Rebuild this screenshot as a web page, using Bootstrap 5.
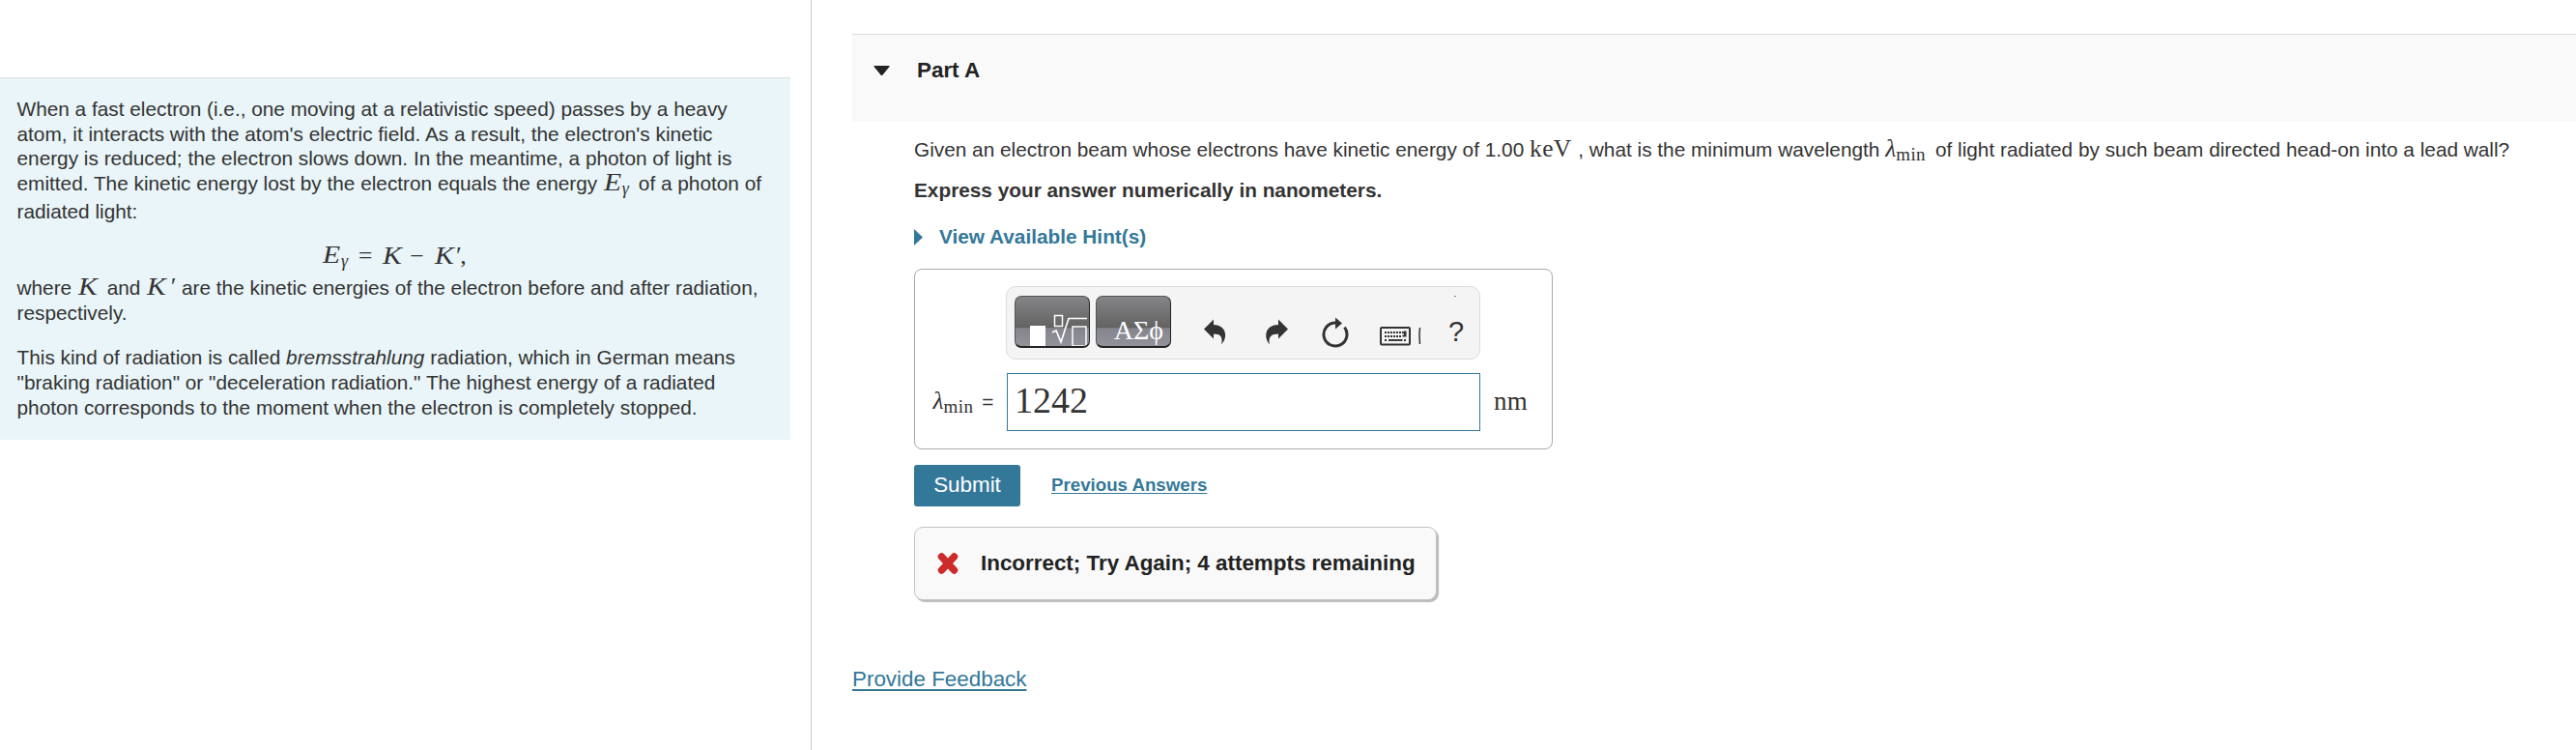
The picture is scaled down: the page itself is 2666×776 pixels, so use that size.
<!DOCTYPE html>
<html lang="en">
<head>
<meta charset="utf-8">
<meta name="viewport" content="width=device-width, initial-scale=1">
<title>Part A</title>
<link rel="stylesheet" href="https://cdn.jsdelivr.net/npm/bootstrap@5.3.0/dist/css/bootstrap.min.css">
<style>
  body { font-family: "Liberation Sans", Arial, sans-serif; font-size: 20.8px; line-height: 26px; color: #333; background: #fff; }
  a, .tint { color: #347899; }
  .screen { height: 776px; }
  .intro-col { width: 840px; border-right: 1px solid #c0c6cf; padding-top: 80px; }
  .intro { width: 818px; height: 375px; background: #e9f5f8; border-top: 1px solid #dcdcdc; padding: 19px 17.5px 0; }
  .intro p { line-height: 25.7px; white-space: nowrap; }
  .intro .tall { display: inline-block; line-height: 31px; }
  .intro .aside-note { margin-top: 21px; }
  .equation { width: 149px; height: 26px; margin: 18.5px 0 6.5px 316px; }

  .math { display: inline-block; line-height: 0; white-space: nowrap; font-family: "Liberation Serif", "Times New Roman", serif; font-size: 25.5px; }
  .math i, .math span { display: inline-block; transform-origin: 0 50%; }
  .math .wide { transform: scaleX(1.16); }
  .math .low { font-size: 18px; position: relative; top: 4px; }
  .m-energy { width: 31px; padding-left: 1px; } .m-energy .low { margin-left: 3px; }
  .m-k { width: 25px; padding-left: 1px; } .m-kp { width: 31px; padding-left: 1px; }
  .m-kp .prime { margin-left: 6px; }
  .m-kev { width: 44.5px; letter-spacing: .4px; }
  .m-lambda { width: 46px; }
  .m-lambda .low { font-size: 19px; letter-spacing: .4px; }

  .part-col { padding: 35px 0 0 42px; }
  .part-head { height: 91px; background: #f9f9f9; border-top: 1px solid #dcdcdc; padding-left: 22px; padding-bottom: 17px; font-size: 22.4px; color: #222; }
  .part-head svg { margin-right: 28px; }
  .part-body { padding-left: 64px; }
  .question { margin: 16px 0 0; }
  .hints { margin-top: 22px; gap: 17px; }
  .answer { width: 661px; height: 187px; border: 1px solid #aaa; border-radius: 8px; margin-top: 20px; padding-top: 17px; }
  .tools { width: 491px; height: 76px; margin-left: 94px; background: #f4f4f4; border: 1px solid #ddd; border-radius: 10px; padding: 9px 0 0 8px; }
  .key { width: 78px; height: 54px; border: 1px solid #555; border-right-color: #222; border-bottom: 2px solid #222; border-radius: 7px; background: linear-gradient(#858588 0, #626262 63%, #85858d 64%, #92929b 100%); overflow: hidden; color: #fff; padding: 0; }
  .key + .key { margin-left: 6px; }
  .greek { font: 28px/30px "Liberation Serif", serif; padding: 18px 7px 0 0; text-align: right; display: block; }
  .help { font-size: 29px; line-height: 54px; color: #333; width: 17px; margin-left: 28px; padding-top: 10px; }
  .speck { width: 2px; height: 1px; background: #777; left: 6px; top: 0; }
  .entry { margin-top: 14px; }
  .entry-label { width: 95px; padding-left: 18.5px; }
  .entry-label .math { width: 45px; }
  .entry input { width: 490px; height: 60px; border: 1px solid #347899; padding: 0 0 4px 7px; font: 38px "Liberation Serif", "Times New Roman", serif; color: #333; border-radius: 0; outline: 0; }
  .unit { font: 27px/30px "Liberation Serif", serif; margin-left: 14px; letter-spacing: .3px; padding-bottom: 2px; }
  .actions { margin-top: 16px; height: 43px; }
  .btn-submit { width: 110px; height: 43px; background: #347899; color: #fff; border-radius: 3px; font-size: 22.4px; line-height: 42px; padding: 0 0 1px; border: 0; }
  .previous { font-size: 18.7px; margin-left: 32px; padding-bottom: 2px; text-underline-offset: 2px; text-decoration-thickness: 1px; }
  .feedback { width: 541px; height: 76px; margin-top: 21px; background: #f9f9f9; border: 1px solid #c4c4c4; border-radius: 9px; box-shadow: 2px 2px 1px #bbb; padding-left: 23px; font-size: 22.4px; color: #222; }
  .feedback span { margin-left: 23px; }
  .provide { font-size: 22.4px; margin-top: 69px; text-underline-offset: 3px; text-decoration-thickness: 2px; }
</style>
</head>
<body>
<div class="screen d-flex overflow-hidden">
  <aside class="intro-col flex-shrink-0">
    <div class="intro">
      <p class="m-0">When a fast electron (i.e., one moving at a relativistic speed) passes by a heavy<br>atom, it interacts with the atom's electric field. As a result, the electron's kinetic<br>energy is reduced; the electron slows down. In the meantime, a photon of light is<br>emitted. The kinetic energy lost by the electron equals the energy <span class="math m-energy"><i class="wide">E</i><i class="low">γ</i></span> of a photon of<br><span class="tall">radiated light:</span></p>
      <div class="equation math d-flex justify-content-between align-items-center"><span><i class="wide">E</i><i class="low ms-1">γ</i></span><span>=</span><i class="wide">K</i><span>−</span><span><i class="wide">K</i><i class="ms-1">′</i>,</span></div>
      <p class="m-0">where <span class="math m-k"><i class="wide">K</i></span> and <span class="math m-kp"><i class="wide">K</i><i class="prime">′</i></span> are the kinetic energies of the electron before and after radiation,<br>respectively.</p>
      <p class="aside-note mb-0">This kind of radiation is called <em>bremsstrahlung</em> radiation, which in German means<br>"braking radiation" or "deceleration radiation." The highest energy of a radiated<br>photon corresponds to the moment when the electron is completely stopped.</p>
    </div>
  </aside>

  <main class="part-col flex-grow-1">
    <header class="part-head d-flex align-items-center fw-bold">
      <svg width="17" height="10" viewBox="0 0 17 10"><path d="M1 0h15q1 0 .5 1L9.5 9.500q-1 1-2 0L.5 1Q0 0 1 0z" fill="#222"/></svg>
      <span>Part A</span>
    </header>
    <div class="part-body">
      <p class="question text-nowrap">Given an electron beam whose electrons have kinetic energy of 1.00 <span class="math m-kev">keV</span> , what is the minimum wavelength <span class="math m-lambda"><i>λ</i><span class="low">min</span></span> of light radiated by such beam directed head-on into a lead wall?</p>
      <p class="fw-bold mb-0 mt-3">Express your answer numerically in nanometers.</p>
      <div class="hints tint fw-bold d-flex align-items-center">
        <svg width="9" height="17" viewBox="0 0 9 17"><path d="M0 0L9 8.500 0 17z" fill="currentColor"/></svg>
        <span>View Available Hint(s)</span>
      </div>

      <section class="answer">
        <div class="tools d-flex align-items-start">
          <button class="key" type="button" aria-label="Templates">
            <svg class="d-block" width="76" height="51" viewBox="1 1 76 51" fill="none" stroke="#fff"><path d="M16 31h16v21H16z" fill="#fff" stroke="none"/><path d="M41.500 20.500h8v11h-8zM60 32h14v20H60z" stroke-width="1.500"/><path d="M39 38l4-2 5 12 8-24.500h19" stroke-width="1.700"/></svg>
          </button>
          <button class="key" type="button"><span class="greek">ΑΣϕ</span></button>
          <svg class="flex-shrink-0" width="255" height="54" viewBox="1212 306.500 255 54" fill="#333">
            <path d="M1246 341l10-10v5.500c12 0 16 12 8 20.500 2-8-1-11-8-11v5z"/>
            <path d="M1333 341l-10-10v5.500c-13 0-16 12-9 20.500-2-8 2-11 9-11v5z"/>
            <path d="M1382 334.500a12 12 0 1 0 9.500 4.700" fill="none" stroke="#333" stroke-width="3"/><path d="M1382 329l7 6-7 6z"/>
            <rect x="1429" y="339.500" width="30" height="17.500" rx="1" fill="none" stroke="#333" stroke-width="2"/>
            <path d="M1433 344.500h20M1433 348.500h17M1433 352.500h3m1.500 0h14m1.500 0h3" fill="none" stroke="#333" stroke-width="1.800" stroke-dasharray="2 1"/><path d="M1453 343h2.500v6h-4v-2h1.500zM1437 351.500h14v1.800h-14z"/>
          </svg>
          <svg width="4" height="54" viewBox="0 0 4 54"><path d="M2.500 33q-1 8 0 17" fill="none" stroke="#333" stroke-width="1.500"/></svg>
          <div class="help position-relative"><i class="speck position-absolute"></i>?</div>
        </div>
        <div class="entry d-flex align-items-center">
          <label class="entry-label text-nowrap" for="ans"><span class="math m-lambda"><i>λ</i><span class="low">min</span></span> =</label>
          <input id="ans" type="text" value="1242">
          <span class="unit">nm</span>
        </div>
      </section>

      <div class="actions d-flex align-items-center">
        <button class="btn btn-submit" type="button">Submit</button>
        <a class="previous fw-bold" href="#">Previous Answers</a>
      </div>
      <div class="feedback d-flex align-items-center fw-bold">
        <svg width="22" height="22" viewBox="0 0 22 22"><path d="M4.500 4l13 14M17.500 4l-13 14" stroke="#cd2a2a" stroke-width="7.500" stroke-linecap="round"/></svg>
        <span>Incorrect; Try Again; 4 attempts remaining</span>
      </div>
    </div>
    <div class="provide"><a href="#">Provide Feedback</a></div>
  </main>
</div>
<script src="https://cdn.jsdelivr.net/npm/bootstrap@5.3.0/dist/js/bootstrap.bundle.min.js"></script>
</body>
</html>
